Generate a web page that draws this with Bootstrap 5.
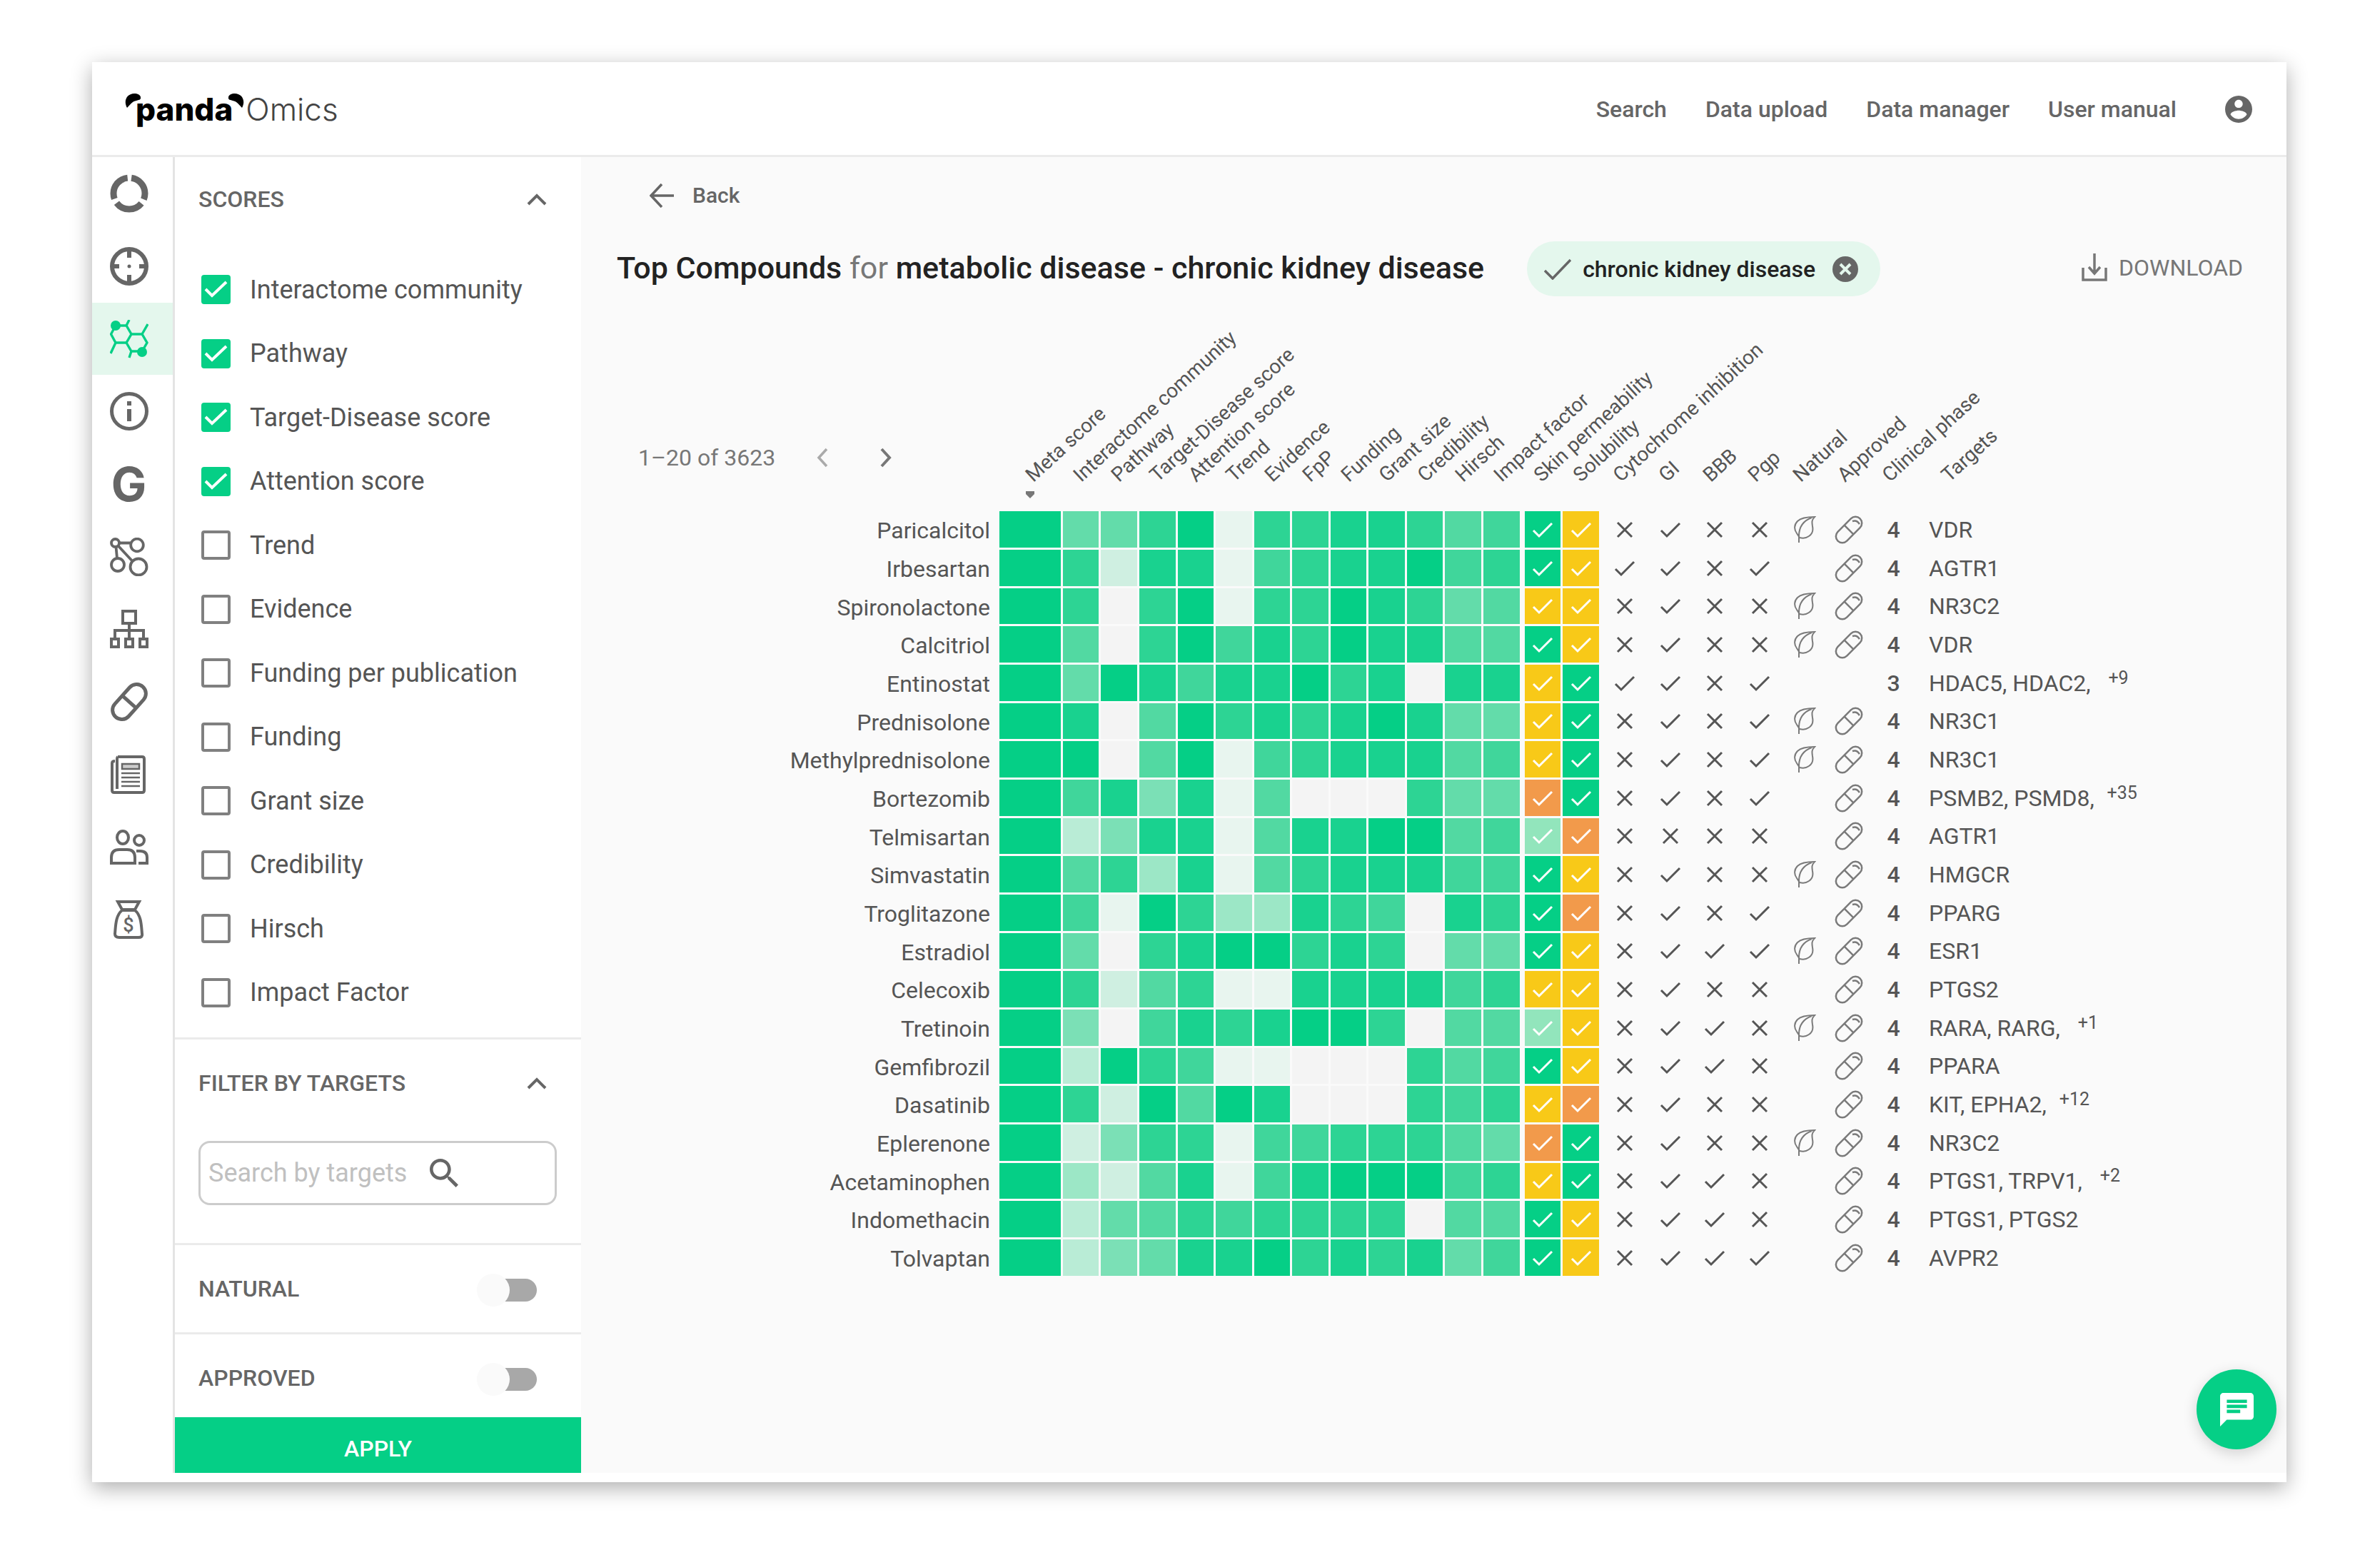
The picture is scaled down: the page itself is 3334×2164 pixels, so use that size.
<!DOCTYPE html>
<html lang="en">
<head>
<meta charset="utf-8">
<meta name="viewport" content="width=device-width, initial-scale=1">
<title>PandaOmics – Top Compounds</title>
<link href="https://cdn.jsdelivr.net/npm/bootstrap@5.3.0/dist/css/bootstrap.min.css" rel="stylesheet">
<style>
:root{--green:#05cf86;--mint:#e4f7ed;--ink:#555;--grey:#666;--line:#ebebeb}
body{font-family:Roboto,"Liberation Sans",sans-serif;font-size:32px;line-height:40px;color:var(--ink);background:#fff}
button{font:inherit;color:inherit}
svg{display:block;flex:none}
.page-pad{padding:87px 131px 87px 129px}
.app-window{background:#fff;box-shadow:0 8px 28px rgba(0,0,0,.32);padding-bottom:13px}
.top-bar{height:133px;border-bottom:3px solid var(--line);padding:2px 48px 0 46px}
.brand-name{font-family:Inter,sans-serif;font-size:44px;line-height:50px;color:#000}
.brand-name b{font-weight:800}
.brand-name span{font-weight:300;color:#444}
.ear-left{margin-right:-7px}
.ear-right{margin:0 2px 0 -6px}
.top-links{gap:54px;font-size:32px;font-weight:500}
.top-links a{color:var(--grey);text-decoration:none}
.top-links .account{margin-left:14px}
.rail{width:116px;border-right:3px solid #e4e4e4}
.rail a{height:102px;color:var(--grey);text-decoration:none;padding-right:10px}
.rail a:nth-child(3n){height:101px}
.rail a.active{background:var(--mint);color:var(--green)}
.rail .letter{font-family:Inter,sans-serif;font-size:66px;line-height:66px;font-weight:700}
.filters{width:569px}
.filters section{border-bottom:3px solid var(--line)}
.filters section:last-of-type{border-bottom:0}
.panel-head{height:122px;padding:0 34px 0 33px;font-size:32px;font-weight:500;color:var(--grey)}
.panel-head button,.plain{background:none;border:0;padding:0}
.panel-head button{margin-right:14px}
.scores{padding:19px 37px 18px}
.score-row{height:89px;font-size:36px;gap:27px}
.score-row:nth-child(even){height:90px}
.score-row .form-check-input{width:41px;height:41px;margin:0;border:4px solid #808080;border-radius:4px;flex:none}
.score-row .form-check-input:checked{border:0;background-color:var(--green);background-size:41px 41px;background-image:url("data:image/svg+xml,%3Csvg xmlns='http://www.w3.org/2000/svg' viewBox='0 0 41 41'%3E%3Cpath d='M6 20l9 9 20-19' fill='none' stroke='%23fff' stroke-width='4'/%3E%3C/svg%3E")}
.target-search{margin:20px 34px 53px 33px;height:90px;border:3px solid #ccc;border-radius:16px;padding:0 11px;gap:20px}
.target-search input{width:290px;border:0;padding:0;outline:0;font-size:36px;color:var(--ink);background:none}
.target-search input::placeholder{color:#c0c0c0}
.approved{height:116px;padding-top:6px}
.switch-box{appearance:none;width:84px;height:50px;margin:0 28px 0 0;background:url("data:image/svg+xml,%3Csvg xmlns='http://www.w3.org/2000/svg' viewBox='0 0 84 50'%3E%3Crect x='12' y='11' width='72' height='32' rx='16' fill='%23a8a8a8'/%3E%3Ccircle cx='23' cy='27' r='23' fill='%23fafafa'/%3E%3C/svg%3E")}
.apply-btn{height:78px;padding:10px 0 0;border:0;background:var(--green);color:#fff;font-size:32px;font-weight:500}
.results{background:#fafafa;padding:0 61px 0 50px}
.back-row{height:108px;padding-left:46px;font-size:30px;font-weight:500}
.back-row a{color:var(--grey);text-decoration:none;gap:26px}
.title-row{margin-top:10px;gap:60px}
.title-row h1{font-size:43px;line-height:50px;font-weight:500;color:#222;margin:0}
.title-row h1 span{font-weight:400;color:#777}
.chip{height:77px;border-radius:39px;background:var(--mint);padding:0 31px 0 24px;font-size:32px;font-weight:500;color:#222}
.download{color:#777}
.heat{table-layout:fixed;width:100%;border-collapse:separate;border-spacing:0;margin-bottom:0}
.heat th,.heat td{padding:0}
.heat thead th{height:301px;position:relative;vertical-align:bottom;font-weight:400}
.heat thead .tilt{position:absolute;left:50%;bottom:36px;margin-left:2px;font-size:28px;line-height:28px;white-space:nowrap;transform:rotate(-42.5deg);transform-origin:0 100%}
.heat thead .tilt-lead{margin-left:6px}
.heat thead .tilt-flag{margin-left:-2px}
.heat thead .tilt-last{left:48px}
.sort-mark{position:absolute;left:37px;bottom:18px}
.pager{height:30px;margin:0 0 60px 30px;color:#777}
.pager .range{width:250px}
.pager .prev{width:89px;color:#aaa}
.heat tbody tr{height:54px}
.heat tbody tr:nth-child(3n){height:53px}
.heat tbody th{font-weight:400;text-align:right;padding-right:13px;vertical-align:middle;line-height:40px}
.heat tbody td{vertical-align:middle;line-height:40px;border-bottom:3px solid transparent}
.heat tbody .tile{border-right:3px solid transparent;background-clip:padding-box}
.heat tbody .tile-gap{border-left:4px solid transparent}
.heat td svg{margin:auto}
.faint{color:#7a7a7a}
.phase{font-weight:500;text-align:center}
.heat tbody .gene{padding-left:18px;white-space:nowrap}
.more{display:inline-block;min-width:52px;margin-left:13px;text-align:center;font-size:25px;line-height:24px;vertical-align:10px}
.lv-9{background:#05cf86}.lv-8{background:#19d28f}.lv-7{background:#2dd494}.lv-6{background:#40d69b}
.lv-5{background:#52d9a2}.lv-4{background:#63dcaa}.lv-3{background:#7be0b6}.lv-2{background:#9ce7c6}
.lv-1{background:#b9ecd6}.lv-b{background:#cfefe1}.lv-0{background:#e8f5ef}.lv-n{background:#f4f4f4}
.tn-g{background:#05cf86}.tn-y{background:#f8c918}.tn-o{background:#f29a4b}.tn-l{background:#92e5bc}
.tn-g,.tn-y,.tn-o,.tn-l{color:#fff}
.c-name{width:536px}.c-meta{width:89px}.c-54{width:54px}.c-53{width:53px}.c-57{width:57px}
.c-65{width:65px}.c-63{width:63px}.c-62{width:62px}
.chat-btn{position:absolute;right:14px;bottom:46px;width:112px;height:112px;border:0;border-radius:50%;background:var(--green);color:#fff;box-shadow:0 6px 20px rgba(0,0,0,.16)}
</style>
<script src="https://cdn.jsdelivr.net/npm/bootstrap@5.3.0/dist/js/bootstrap.bundle.min.js"></script>
</head>
<body>
<svg width="0" height="0" class="position-absolute" aria-hidden="true">
  <symbol id="i-check" viewBox="0 0 30 24"><path d="M2 13l8 8L28 3" fill="none" stroke="currentColor" stroke-width="3"/></symbol>
  <symbol id="i-cross" viewBox="0 0 24 24"><path d="M2 2l20 20M22 2L2 22" fill="none" stroke="currentColor" stroke-width="3"/></symbol>
  <symbol id="i-leaf" viewBox="0 0 32 38"><path d="M30 1C20 1 11 2 6 7c-5 5-5 12-1 17l4 6c4 1 9 1 13-2 5-3 6-9 5-14-1-6-1-9 3-13zM8 37V28C8 17 12 7 26 2" fill="none" stroke="currentColor" stroke-width="2"/></symbol>
  <symbol id="i-pill" viewBox="0 0 40 40"><g fill="none" stroke="currentColor" stroke-width="2.500" transform="rotate(-45 20 20)"><rect x="-2" y="11" width="44" height="18" rx="9"/><path d="M20 11v18M32 15q6 3 4 10"/></g></symbol>
  <symbol id="i-up" viewBox="0 0 28 18"><path d="M2 16L14 4l12 12" fill="none" stroke="currentColor" stroke-width="4"/></symbol>
</svg>

<div class="page-pad">
<div class="app-window position-relative">
  <header class="top-bar d-flex align-items-center justify-content-between">
    <a href="#" class="d-flex align-items-center text-decoration-none" aria-label="pandaOmics home">
      <svg width="22" height="20" viewBox="0 0 22 20" class="ear-left mb-4"><path d="M3 20C-3 9 4 0 13 0c6 0 10 3 9 7-1 3-7 2-11 5-3 2-5 5-8 8z" fill="#000"/></svg>
      <span class="brand-name d-flex align-items-center"><b>panda</b><svg width="22" height="20" viewBox="0 0 22 20" class="ear-right mb-4"><path d="M19 20C25 9 18 0 9 0 3 0-1 3 0 7c1 3 7 2 11 5 3 2 5 5 8 8z" fill="#000"/></svg><span>Omics</span></span>
    </a>
    <nav class="top-links d-flex align-items-center">
      <a href="#">Search</a><a href="#">Data upload</a><a href="#">Data manager</a><a href="#">User manual</a>
      <a href="#" class="account" aria-label="Account"><svg width="38" height="38" viewBox="2 2 20 20"><path fill="currentColor" d="M12 2C6.48 2 2 6.48 2 12s4.480 10 10 10 10-4.480 10-10S17.520 2 12 2zm0 3c1.660 0 3 1.340 3 3s-1.340 3-3 3-3-1.340-3-3 1.340-3 3-3zm0 14.200c-2.500 0-4.710-1.280-6-3.220.03-1.990 4-3.080 6-3.080 1.990 0 5.970 1.090 6 3.080-1.290 1.940-3.500 3.220-6 3.220z"/></svg></a>
    </nav>
  </header>

  <div class="d-flex">
    <nav class="rail flex-shrink-0 d-flex flex-column" aria-label="Sections">
      <a href="#" class="d-flex align-items-center justify-content-center" aria-label="Overview"><svg width="54" height="54" viewBox="0 0 54 54"><circle cx="27" cy="27" r="22" fill="none" stroke="currentColor" stroke-width="9" stroke-dasharray="39.600 6.470" stroke-dashoffset="-3.200" transform="rotate(-90 27 27)"/></svg></a>
      <a href="#" class="d-flex align-items-center justify-content-center" aria-label="Targets"><svg width="54" height="54" viewBox="0 0 54 54" fill="none" stroke="currentColor"><circle cx="27" cy="27" r="24" stroke-width="6"/><path d="M27 4v11M27 39v11M4 27h9M41 27h9" stroke-width="6"/><circle cx="27" cy="27" r="2.500" fill="currentColor" stroke="none"/></svg></a>
      <a href="#" class="active d-flex align-items-center justify-content-center" aria-label="Compounds"><svg width="54" height="54" viewBox="0 0 54 54" fill="none" stroke="currentColor" stroke-width="3.400"><path d="M8 8h15l7 12-7 12H8L1.500 20zM30 20h15l7 12-7 12H30l-7-12M23 8l4-8M45 20l8-14M8 32L1 47M30 44l-3 9"/><g fill="currentColor" stroke="none"><circle cx="8" cy="8" r="7"/><circle cx="45" cy="45" r="7"/></g></svg></a>
      <a href="#" class="d-flex align-items-center justify-content-center" aria-label="Info"><svg width="54" height="54" viewBox="0 0 54 54" fill="none" stroke="currentColor"><circle cx="27" cy="27" r="24.500" stroke-width="5"/><path d="M27 24v17M27 13v6" stroke-width="6"/></svg></a>
      <a href="#" class="d-flex align-items-center justify-content-center letter">G</a>
      <a href="#" class="d-flex align-items-center justify-content-center" aria-label="Network"><svg width="54" height="54" viewBox="0 0 54 54" fill="none" stroke="currentColor" stroke-width="3.800"><circle cx="7.500" cy="7.500" r="5.500"/><circle cx="38" cy="10.500" r="8.800"/><circle cx="11" cy="38" r="9"/><circle cx="40" cy="41" r="11.500"/><path d="M13 7.500h16M8.500 13l1.500 16M11.500 11.500L31.500 33"/></svg></a>
      <a href="#" class="d-flex align-items-center justify-content-center" aria-label="Hierarchy"><svg width="54" height="54" viewBox="0 0 54 54" fill="none" stroke="currentColor" stroke-width="4"><path d="M18 2h18v17H18zM27 19v22M7 41V29h40v12M2 41h10v11H2zM22 41h10v11H22zM42 41h10v11H42z"/></svg></a>
      <a href="#" class="d-flex align-items-center justify-content-center" aria-label="Drugs"><svg width="54" height="54" viewBox="0 0 54 54" fill="none" stroke="currentColor" stroke-width="5"><g transform="rotate(-48 27 27)"><rect x="-1.500" y="14" width="57" height="26" rx="13"/><path d="M27 14v26"/></g></svg></a>
      <a href="#" class="d-flex align-items-center justify-content-center" aria-label="Publications"><svg width="54" height="54" viewBox="0 0 54 54" fill="none" stroke="currentColor" stroke-width="4"><path d="M11 2h34q3 0 3 3v44q0 3-3 3H6q-3 0-3-3V11q0-3 4-3M11 2q-1 1-1 3v42"/><path d="M17 12h24v7H17z" stroke-width="2.500" fill="#ccc"/><path d="M16 25h26M16 31h26M16 37h26M16 43h26" stroke-width="2.600"/></svg></a>
      <a href="#" class="d-flex align-items-center justify-content-center" aria-label="Community"><svg width="54" height="54" viewBox="0 0 54 54" fill="none" stroke="currentColor" stroke-width="4"><ellipse cx="18" cy="14" rx="8" ry="9"/><circle cx="41" cy="18" r="7"/><path d="M2 50V42q0-11 11-11h11q11 0 11 11v8zM37 33h5q10 0 10 9v8H40"/></svg></a>
      <a href="#" class="d-flex align-items-center justify-content-center" aria-label="Funding"><svg width="54" height="54" viewBox="0 0 54 54" fill="none" stroke="currentColor" stroke-width="4"><path d="M11 2h30l-6 11H17zM17 14C8 21 8 36 7 47q0 5 6 5h27q6 0 5-5c-1-11-1-26-10-33z"/><text x="26" y="44" text-anchor="middle" font-family="Roboto,sans-serif" font-size="27" font-weight="500" fill="currentColor" stroke="none">$</text></svg></a>
    </nav>

    <aside class="filters flex-shrink-0">
      <section>
        <div class="panel-head d-flex align-items-center justify-content-between pb-1">SCORES <button type="button" aria-label="Collapse scores"><svg width="28" height="18"><use href="#i-up"/></svg></button></div>
        <div class="scores" id="scoreList"></div>
      </section>
      <section>
        <div class="panel-head d-flex align-items-center justify-content-between"><label for="targetSearch">FILTER BY TARGETS</label> <button type="button" aria-label="Collapse targets"><svg width="28" height="18"><use href="#i-up"/></svg></button></div>
        <div class="target-search d-flex align-items-center">
          <input type="text" id="targetSearch" placeholder="Search by targets">
          <svg width="40" height="40" viewBox="3 3 17.500 17.500" fill="#666"><path d="M15.500 14h-.79l-.28-.27C15.410 12.590 16 11.110 16 9.500 16 5.910 13.090 3 9.500 3S3 5.910 3 9.500 5.910 16 9.500 16c1.610 0 3.090-.59 4.230-1.570l.27.28v.79l5 4.990L20.490 19l-4.990-5zm-6 0C7.010 14 5 11.990 5 9.500S7.010 5 9.500 5 14 7.010 14 9.500 11.990 14 9.500 14z"/></svg>
        </div>
      </section>
      <section><div class="panel-head d-flex align-items-center justify-content-between"><label for="swNatural">NATURAL</label><input class="switch-box" type="checkbox" role="switch" id="swNatural"></div></section>
      <section><div class="panel-head approved d-flex align-items-center justify-content-between"><label for="swApproved">APPROVED</label><input class="switch-box" type="checkbox" role="switch" id="swApproved"></div></section>
      <button type="button" class="apply-btn w-100 d-block">APPLY</button>
    </aside>

    <main class="results flex-grow-1">
      <div class="back-row d-flex align-items-center"><a href="#" class="d-flex align-items-center"><svg width="34" height="34" viewBox="0 0 34 34" fill="none" stroke="currentColor" stroke-width="3.500"><path d="M34 17H3M17 1L2 17l15 16"/></svg>Back</a></div>
      <div class="title-row d-flex align-items-center">
        <h1 class="pb-1">Top Compounds <span>for</span> metabolic disease - chronic kidney disease</h1>
        <div class="chip d-flex align-items-center">
          <svg width="38" height="30" viewBox="0 0 38 30" class="me-3" fill="none" stroke="#666" stroke-width="3.500"><path d="M1 17l11 11L37 2"/></svg>
          <span>chronic kidney disease</span>
          <button type="button" class="plain ms-4" aria-label="Remove chronic kidney disease"><svg width="36" height="36" viewBox="0 0 36 36"><circle cx="18" cy="18" r="18" fill="#666"/><path d="M11 11l14 14M25 11L11 25" stroke="#e4f7ed" stroke-width="4"/></svg></button>
        </div>
        <button type="button" class="download plain ms-auto d-flex align-items-center pb-1"><svg width="36" height="40" viewBox="0 0 36 40" class="me-3" fill="none" stroke="currentColor" stroke-width="3.500"><path d="M18 0v26M10 19l8 9 8-9M2 20v17h32V20"/></svg>DOWNLOAD</button>
      </div>
      <table class="heat">
        <colgroup>
          <col class="c-name"><col class="c-meta">
          <col class="c-53"><col class="c-54"><col class="c-54"><col class="c-53"><col class="c-54"><col class="c-53"><col class="c-54"><col class="c-53"><col class="c-54"><col class="c-53"><col class="c-54"><col class="c-54">
          <col class="c-57"><col class="c-54">
          <col class="c-65"><col class="c-63"><col class="c-62"><col class="c-63"><col class="c-63"><col class="c-62"><col class="c-63"><col>
        </colgroup>
        <thead><tr id="headRow">
          <th scope="col"><div class="pager d-flex align-items-center"><span class="range">1–20 of 3623</span><button type="button" class="plain prev" aria-label="Previous page"><svg width="16" height="28" viewBox="0 0 16 28"><path d="M14 2L3 14l11 12" fill="none" stroke="currentColor" stroke-width="3.500"/></svg></button><button type="button" class="plain" aria-label="Next page"><svg width="16" height="28" viewBox="0 0 16 28"><path d="M2 2l11 12L2 26" fill="none" stroke="currentColor" stroke-width="4"/></svg></button></div></th>
        </tr></thead>
        <tbody id="rows"></tbody>
      </table>
    </main>
  </div>
  <button type="button" class="chat-btn d-flex align-items-center justify-content-center" aria-label="Chat"><svg width="47" height="47" viewBox="2 2 20 20" fill="currentColor"><path d="M20 2H4c-1.100 0-1.990.9-1.990 2L2 22l4-4h14c1.100 0 2-.9 2-2V4c0-1.100-.9-2-2-2zM6 9h12v2H6V9zm8 5H6v-2h8v2zm4-6H6V6h12v2z"/></svg></button>
</div>
</div>

<script>
const scores = ['Interactome community','Pathway','Target-Disease score','Attention score','Trend','Evidence','Funding per publication','Funding','Grant size','Credibility','Hirsch','Impact Factor'];
document.getElementById('scoreList').innerHTML = scores.map((s,i)=>`<div class="score-row d-flex align-items-center"><input class="form-check-input" type="checkbox" id="sc${i}"${i<4?' checked':''}><label for="sc${i}">${s}</label></div>`).join('');

const heads = ['Meta score','Interactome community','Pathway','Target-Disease score','Attention score','Trend','Evidence','FpP','Funding','Grant size','Credibility','Hirsch','Impact factor','Skin permeability','Solubility','Cytochrome inhibition','GI','BBB','Pgp','Natural','Approved','Clinical phase','Targets'];
document.getElementById('headRow').insertAdjacentHTML('beforeend', heads.map((h,i)=>{
  const kind = i===0 ? ' tilt-lead' : i===22 ? ' tilt-last' : i>14 ? ' tilt-flag' : '';
  const mark = i===0 ? '<svg class="sort-mark" width="12" height="10" viewBox="0 0 12 10"><path d="M0 0h12v4L6 10 0 4z" fill="#777"/></svg>' : '';
  return `<th scope="col"><span class="tilt${kind}">${h}</span>${mark}</th>`;
}).join(''));

/* name | score levels | permeability, solubility | cytochrome GI BBB Pgp | natural | phase | targets | further targets */
const data = `Paricalcitol|447907788756|gy|xvxx|N|4|VDR
Irbesartan|7b8806788967|gy|vvxv||4|AGTR1
Spironolactone|7n7907798745|yy|xvxx|N|4|NR3C2
Calcitriol|5n7968798855|gy|xvxx|N|4|VDR
Entinostat|498688978n88|yg|vvxv||3|HDAC5, HDAC2,|+9
Prednisolone|8n5978789844|yg|xvxv|N|4|NR3C1
Methylprednisolone|9n5906788856|yg|xvxv|N|4|NR3C1
Bortezomib|683805nnn744|og|xvxv||4|PSMB2, PSMD8,|+35
Telmisartan|138805889956|lo|xxxx||4|AGTR1
Simvastatin|572805788866|gy|xvxx|N|4|HMGCR
Troglitazone|609722876n87|go|xvxv||4|PPARG
Estradiol|4n7899787n44|gy|xvvv|N|4|ESR1
Celecoxib|7b5700888867|yy|xvxx||4|PTGS2
Tretinoin|3n6878997n55|ly|xvvx|N|4|RARA, RARG,|+1
Gemfibrozil|197600nnn756|gy|xvvx||4|PPARA
Dasatinib|7b9598nnn767|yo|xvxx||4|KIT, EPHA2,|+12
Eplerenone|b37706677754|og|xvxx|N|4|NR3C2
Acetaminophen|2b5806899967|yg|xvvx||4|PTGS1, TRPV1,|+2
Indomethacin|145767777n55|gy|xvvx||4|PTGS1, PTGS2
Tolvaptan|134889787846|gy|xvvv||4|AVPR2`.split('\n').map(l=>l.split('|'));
const icon = (n,w,h)=>`<svg width="${w}" height="${h}"><use href="#i-${n}"/></svg>`;
document.getElementById('rows').innerHTML = data.map(([name,lv,tone,flags,nat,phase,genes,more])=>
  `<tr><th scope="row">${name}</th><td class="tile lv-9"></td>`
  + [...lv].map(c=>`<td class="tile lv-${c}"></td>`).join('')
  + [...tone].map((c,i)=>`<td class="tile tn-${c}${i?'':' tile-gap'}">${icon('check',30,24)}</td>`).join('')
  + [...flags].map(c=>`<td>${c==='v'?icon('check',30,24):icon('cross',24,24)}</td>`).join('')
  + `<td class="faint">${nat?icon('leaf',32,38):''}</td><td class="faint">${phase==='4'?icon('pill',40,40):''}</td><td class="phase">${phase}</td>`
  + `<td class="gene">${genes}${more?`<span class="more">${more}</span>`:''}</td></tr>`).join('');
</script>
</body>
</html>
